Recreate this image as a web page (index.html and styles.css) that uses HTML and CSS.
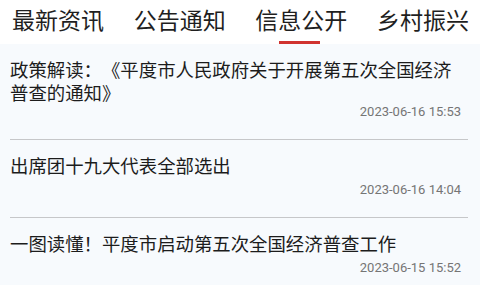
FILE: index.html
```html
<!DOCTYPE html>
<html lang="zh-CN">
<head>
<meta charset="utf-8">
<link rel="stylesheet" href="styles.css">
</head>
<body>
<div class="page">
  <nav class="tabs">
    <div class="tab"><span class="tab-text">最新资讯</span></div>
    <div class="tab"><span class="tab-text">公告通知</span></div>
    <div class="tab active"><span class="tab-text">信息公开</span><span class="bar"></span></div>
    <div class="tab"><span class="tab-text">乡村振兴</span></div>
  </nav>
  <ul class="list">
    <li class="item">
      <div class="title">政策解读：《平度市人民政府关于开展第五次全国经济普查的通知》</div>
      <div class="date">2023-06-16 15:53</div>
    </li>
    <li class="item">
      <div class="title">出席团十九大代表全部选出</div>
      <div class="date">2023-06-16 14:04</div>
    </li>
    <li class="item">
      <div class="title">一图读懂！平度市启动第五次全国经济普查工作</div>
      <div class="date">2023-06-15 15:52</div>
    </li>
  </ul>
</div>
</body>
</html>
```

FILE: styles.css
```css
html, body {
  margin: 0;
  padding: 0;
  height: 100%;
  overflow: hidden;
}
body {
  background: #f7fafd;
  font-family: "Noto Sans CJK SC", "Noto Sans", sans-serif;
  color: #1c1c1c;
  text-spacing-trim: space-all;
}
.page {
  width: 480px;
}
.tabs {
  display: flex;
  justify-content: space-between;
  background: #ffffff;
  height: 44px;
  padding: 4px 11px 0 12px;
  box-sizing: border-box;
}
.tab {
  display: flex;
  flex-direction: column;
  align-items: center;
}
.tab-text {
  font-size: 23px;
  line-height: 30px;
  color: #1f1f1f;
  white-space: nowrap;
}
.bar {
  width: 41px;
  height: 3px;
  margin-top: 7px;
  margin-left: -3px;
  background: #d0332f;
}
.list {
  list-style: none;
  margin: 0;
  padding: 0 12px 0 10px;
}
.item {
  padding: 14px 7px 19px 0;
  border-bottom: 1px solid #c6c7c9;
}
.title {
  font-size: 18.4px;
  line-height: 23px;
  min-height: 28px;
  color: #1c1c1c;
  text-spacing-trim: space-all;
}
.date {
  font-family: Roboto, "Liberation Sans", sans-serif;
  font-size: 13px;
  line-height: 16px;
  color: #757575;
  text-align: right;
}
```
